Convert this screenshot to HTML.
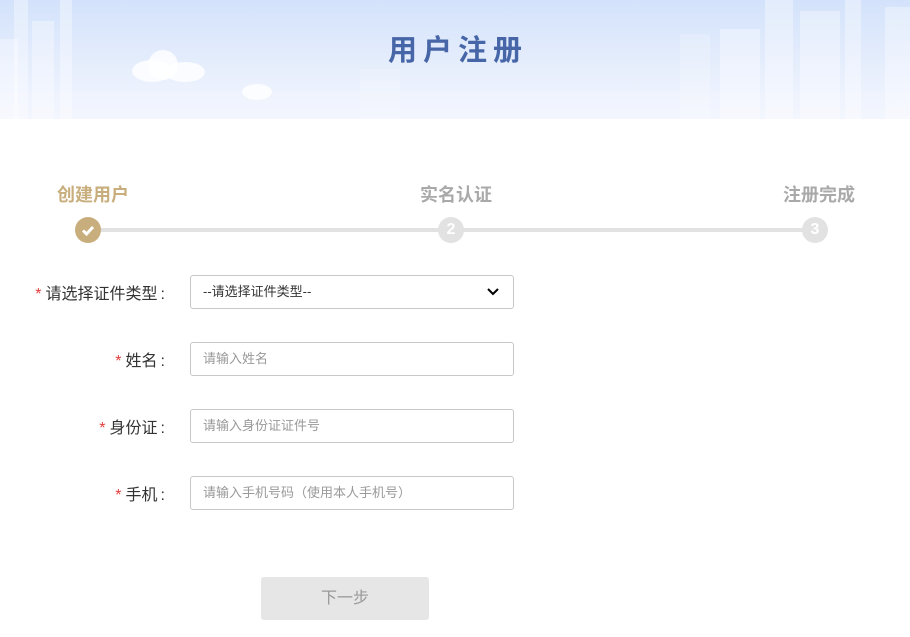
<!DOCTYPE html>
<html><head><meta charset="utf-8"><style>
*{margin:0;padding:0;box-sizing:border-box}
body{width:910px;height:637px;background:#fff;font-family:"Liberation Sans","Noto Sans CJK SC",sans-serif;position:relative;overflow:hidden}
.hdr{position:absolute;left:0;top:0;width:910px;height:119px;background:linear-gradient(#d3e2fb,#eef3fd 80%,#f3f6fe);overflow:hidden}
.b{position:absolute;background:rgba(255,255,255,.35);bottom:0}
.title{position:absolute;left:0;width:910px;top:27px;text-align:center;font-size:29px;font-weight:bold;color:#4766a8;letter-spacing:6px;padding-left:6px}
.cloud{position:absolute;background:rgba(255,255,255,.8);border-radius:50%}
.st{position:absolute;top:181px;font-size:18px;font-weight:bold;color:#a9a9a9}
.line{position:absolute;top:228px;left:88px;width:730px;height:4px;background:#e2e2e2}
.c{position:absolute;top:217px;width:26px;height:26px;border-radius:50%;background:#e2e2e2;color:#fff;font-weight:bold;font-size:16px;text-align:center;line-height:26px}
.lab{position:absolute;right:745px;font-size:16px;color:#333;white-space:nowrap}
.lab i{font-style:normal;color:#e23c3c;margin-right:4px}
.lab b{font-weight:normal;margin-left:3px}
.in{position:absolute;left:190px;width:324px;height:34px;border:1px solid #c8c8c8;border-radius:3px;font-size:13px;color:#999;padding-left:12px;line-height:32px}
.btn{position:absolute;left:261px;top:577px;width:168px;height:43px;background:#e6e6e6;border-radius:3px;color:#999;font-size:16px;text-align:center;line-height:43px}
</style></head><body>
<div class="hdr">
<div class="b" style="left:0;width:18px;height:80px"></div>
<div class="b" style="left:14px;width:14px;height:119px"></div>
<div class="b" style="left:32px;width:22px;height:98px"></div>
<div class="b" style="left:60px;width:12px;height:119px"></div>
<div class="b" style="left:360px;width:40px;height:50px;background:rgba(255,255,255,.15)"></div>
<div class="b" style="left:680px;width:30px;height:85px;background:rgba(255,255,255,.2)"></div>
<div class="b" style="left:720px;width:40px;height:90px"></div>
<div class="b" style="left:765px;width:28px;height:119px"></div>
<div class="b" style="left:800px;width:40px;height:108px"></div>
<div class="b" style="left:845px;width:16px;height:119px"></div>
<div class="b" style="left:885px;width:25px;height:112px"></div>
<div class="cloud" style="left:132px;top:60px;width:40px;height:22px"></div>
<div class="cloud" style="left:148px;top:50px;width:30px;height:30px"></div>
<div class="cloud" style="left:165px;top:62px;width:40px;height:20px"></div>
<div class="cloud" style="left:242px;top:84px;width:30px;height:16px"></div>
<div class="title">用户注册</div>
</div>
<div class="st" style="left:57px;color:#c8ae7c">创建用户</div>
<div class="st" style="left:420px">实名认证</div>
<div class="st" style="left:783px">注册完成</div>
<div class="line"></div>
<div class="c" style="left:75px;background:#c8ae7c"><svg width="26" height="26" viewBox="0 0 26 26"><path d="M8 13.5l3.5 3.5 6.5-7" stroke="#fff" stroke-width="3" fill="none"/></svg></div>
<div class="c" style="left:438px">2</div>
<div class="c" style="left:802px">3</div>
<div class="lab" style="top:280px"><i>*</i>请选择证件类型<b>:</b></div>
<div class="in" style="top:275px;color:#333">--请选择证件类型--<svg style="position:absolute;right:14px;top:11px" width="12" height="9" viewBox="0 0 12 9"><path d="M1 2l5 5 5-5" stroke="#000" stroke-width="2" fill="none"/></svg></div>
<div class="lab" style="top:347px"><i>*</i>姓名<b>:</b></div>
<div class="in" style="top:342px">请输入姓名</div>
<div class="lab" style="top:414px"><i>*</i>身份证<b>:</b></div>
<div class="in" style="top:409px">请输入身份证证件号</div>
<div class="lab" style="top:481px"><i>*</i>手机<b>:</b></div>
<div class="in" style="top:476px">请输入手机号码（使用本人手机号）</div>
<div class="btn">下一步</div>
</body></html>
